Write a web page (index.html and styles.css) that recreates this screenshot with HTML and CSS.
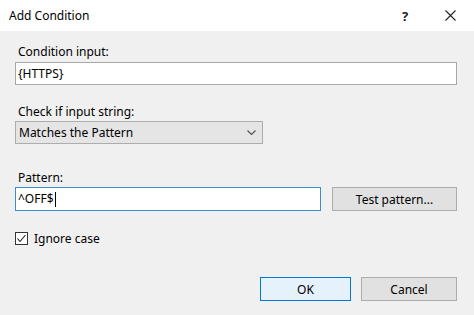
FILE: index.html
```html
<!DOCTYPE html>
<html lang="en">
<head>
    <meta charset="UTF-8">
    <title>Add Condition</title>
    <link rel="stylesheet" href="styles.css">
</head>
<body>
    <div class="titlebar">
        <span class="title">Add Condition</span>
        <span class="help">?</span>
        <span class="close">
            <svg width="11" height="11" viewBox="0 0 11 11">
                <path d="M0.5 0.5 L10.5 10.5 M10.5 0.5 L0.5 10.5" stroke="#222" stroke-width="1.1" fill="none"/>
            </svg>
        </span>
    </div>

    <div class="content">
        <div class="label">Condition input:</div>
        <div class="textbox wide">{HTTPS}</div>

        <div class="label gap-check">Check if input string:</div>
        <div class="combo">
            <span>Matches the Pattern</span>
            <svg width="9" height="5" viewBox="0 0 9 5">
                <path d="M0.5 0.5 L4.5 4.5 L8.5 0.5" stroke="#555" stroke-width="1.2" fill="none"/>
            </svg>
        </div>

        <div class="label gap-pattern">Pattern:</div>
        <div class="pattern-row">
            <div class="textbox focused">^OFF$<span class="caret"></span></div>
            <div class="button test">Test pattern...</div>
        </div>

        <div class="check-row">
            <span class="checkbox">
                <svg width="11" height="11" viewBox="0 0 11 11">
                    <path d="M1.5 5.5 L4 8.5 L9.5 2" stroke="#222" stroke-width="1.1" fill="none"/>
                </svg>
            </span>
            <span>Ignore case</span>
        </div>

        <div class="actions">
            <div class="button default ok">OK</div>
            <div class="button cancel">Cancel</div>
        </div>
    </div>
</body>
</html>
```

FILE: styles.css
```css
html, body {
    margin: 0;
    padding: 0;
    height: 100%;
    overflow: hidden;
}

body {
    background-color: #f0f0f0;
    font-family: 'Noto Sans', 'Open Sans', sans-serif;
    font-size: 12px;
    color: #000;
}

/* Window title bar */
.titlebar {
    background-color: #fff;
    height: 31px;
    display: flex;
    align-items: center;
    padding-left: 9px;
}

.title {
    flex: 1;
    font-size: 12px;
}

.help {
    width: 43px;
    font-size: 13px;
    font-weight: bold;
    color: #222;
}

.close {
    width: 29px;
    display: flex;
}

/* Dialog body */
.content {
    padding: 13px 17px 0 15px;
}

.label {
    line-height: 16px;
    margin-bottom: 2px;
    padding-left: 3px;
}

.gap-check {
    margin-top: 19px;
    margin-bottom: 1px;
}

.gap-pattern {
    margin-top: 26px;
    margin-bottom: 1px;
}

.textbox {
    box-sizing: border-box;
    height: 23px;
    background-color: #fff;
    border: 1px solid #a8a8a8;
    padding-left: 2px;
    line-height: 20px;
    display: flex;
    align-items: center;
}

.textbox.wide {
    width: 442px;
}

.textbox.focused {
    width: 306px;
    height: 24px;
    border-color: #3b8fd9;
}

.caret {
    width: 1px;
    height: 15px;
    background-color: #000;
    margin-left: 1px;
}

.combo {
    box-sizing: border-box;
    width: 248px;
    height: 23px;
    background-color: #e5e5e5;
    border: 1px solid #adadad;
    display: flex;
    align-items: center;
    justify-content: space-between;
    padding: 0 6px 0 3px;
}

.pattern-row {
    display: flex;
    gap: 11px;
}

.button {
    box-sizing: border-box;
    height: 24px;
    background-color: #e1e1e1;
    border: 1px solid #adadad;
    display: flex;
    align-items: center;
    justify-content: center;
}

.button.test {
    width: 125px;
}

.check-row {
    display: flex;
    align-items: center;
    gap: 6px;
    margin-top: 20px;
    height: 14px;
}

.checkbox {
    box-sizing: border-box;
    width: 13px;
    height: 13px;
    border: 1px solid #333;
    background-color: #fff;
    display: flex;
}

.actions {
    display: flex;
    justify-content: flex-end;
    gap: 10px;
    margin-top: 32px;
}

.button.default {
    background-color: #e5f1fb;
    border-color: #0078d7;
}

.button.ok {
    width: 91px;
}

.button.cancel {
    width: 96px;
}
```
